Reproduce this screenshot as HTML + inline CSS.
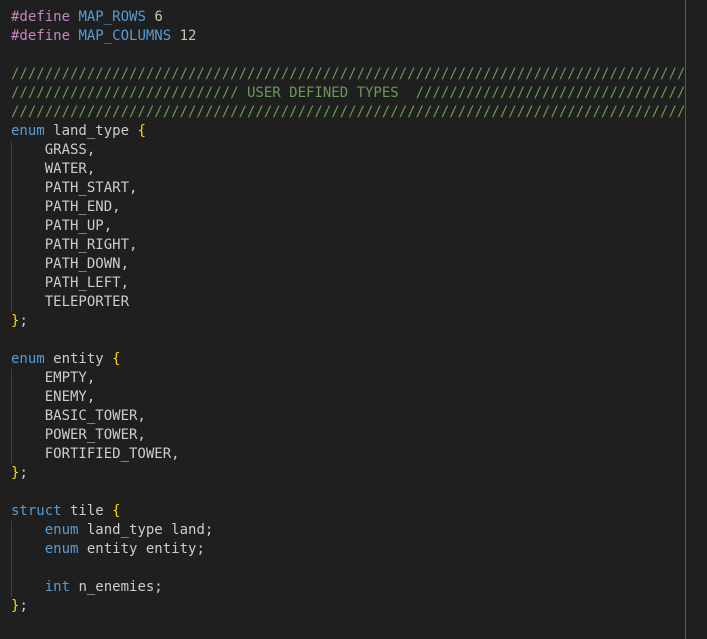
<!DOCTYPE html>
<html><head><style>
html,body{margin:0;padding:0;background:#1f1f1f;width:707px;height:639px;overflow:hidden}
pre{margin:0;padding:8px 0 0 11px;font-family:"DejaVu Sans Mono","Liberation Mono",monospace;font-size:14px;line-height:19px;color:#cccccc;white-space:pre;width:674px;overflow:hidden;position:relative}
.m{color:#c586c0}.c{color:#569cd6}.n{color:#b5cea8}.g{color:#6a9955}.b{color:#ffd700}.t{color:#d4d4d4}
.ruler{position:absolute;left:685px;top:0;width:1px;height:639px;background:#5a5a5a}
.ig{position:absolute;left:11px;width:1px;background:#404040}
</style></head><body>
<div class="ruler"></div>
<div class="ig" style="top:141px;height:171px"></div>
<div class="ig" style="top:369px;height:95px"></div>
<div class="ig" style="top:521px;height:76px"></div>
<pre><span class="m">#define</span> <span class="c">MAP_ROWS</span> <span class="n">6</span>
<span class="m">#define</span> <span class="c">MAP_COLUMNS</span> <span class="n">12</span>

<span class="g">////////////////////////////////////////////////////////////////////////////////////</span>
<span class="g">/////////////////////////// USER DEFINED TYPES  //////////////////////////////////////</span>
<span class="g">////////////////////////////////////////////////////////////////////////////////////</span>
<span class="c">enum</span> land_type <span class="b">{</span>
    GRASS,
    WATER,
    PATH_START,
    PATH_END,
    PATH_UP,
    PATH_RIGHT,
    PATH_DOWN,
    PATH_LEFT,
    TELEPORTER
<span class="b">}</span>;

<span class="c">enum</span> entity <span class="b">{</span>
    EMPTY,
    ENEMY,
    BASIC_TOWER,
    POWER_TOWER,
    FORTIFIED_TOWER,
<span class="b">}</span>;

<span class="c">struct</span> tile <span class="b">{</span>
    <span class="c">enum</span> land_type land;
    <span class="c">enum</span> entity entity;

    <span class="c">int</span> n_enemies;
<span class="b">}</span>;
</pre>
</body></html>
